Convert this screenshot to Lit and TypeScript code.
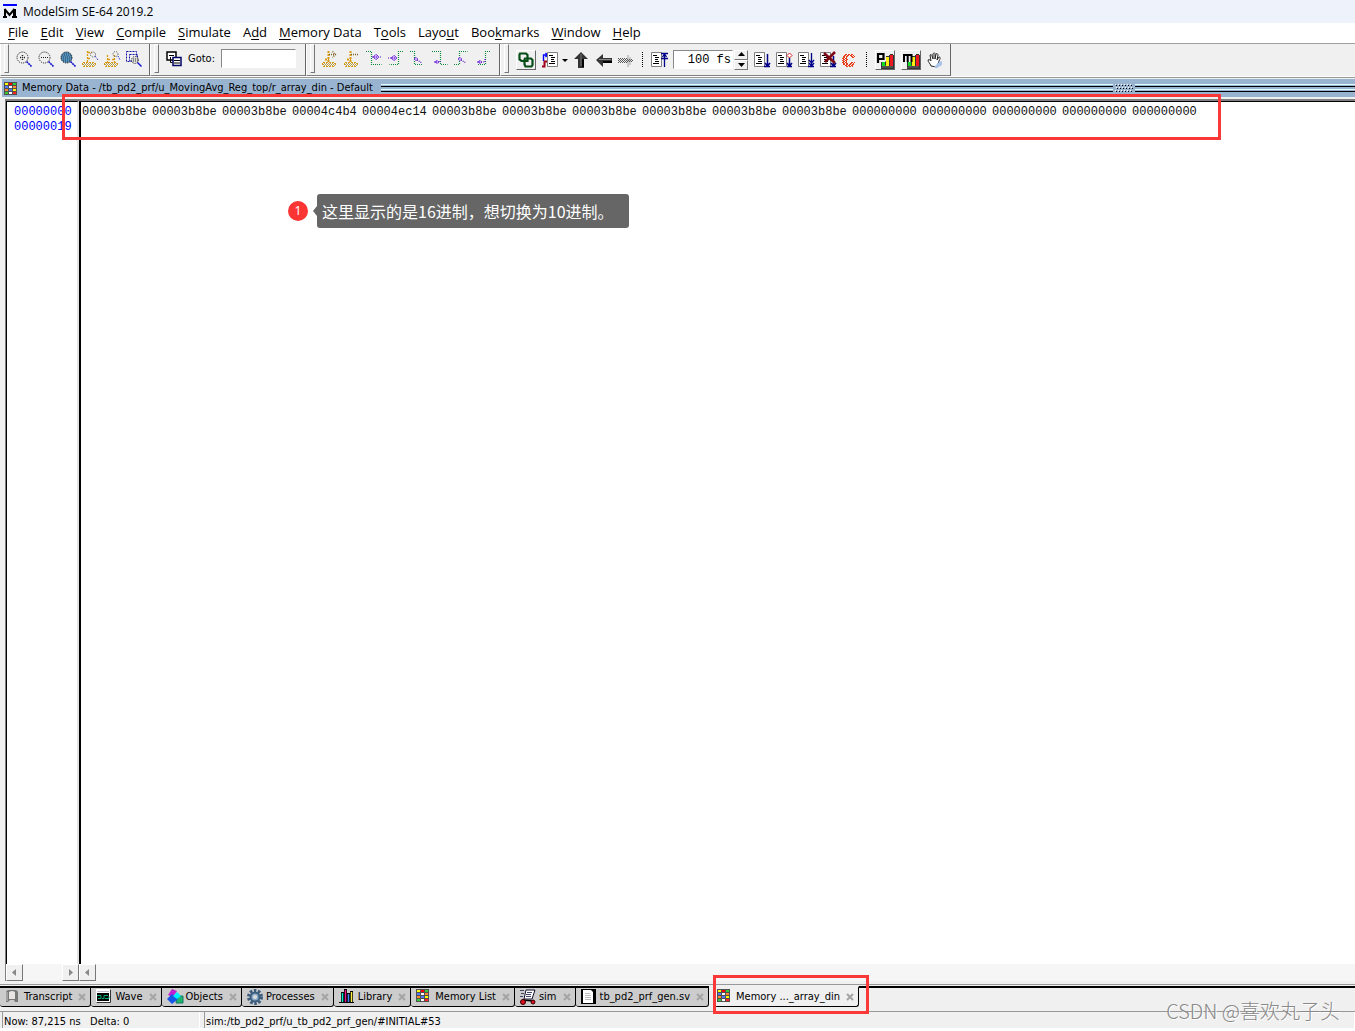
import { LitElement, html, css, svg, nothing, type TemplateResult } from "lit";
import { customElement, property } from "lit/decorators.js";

const page = svg`<path d="M.5 .5h10v14h-10z" fill="#fff" stroke="#808080"/><path d="M2 3.500h4M4 5.500h4M4 7.500h3M4 9.500h4M2 11.500h6" stroke="#000"/>`;
const lens = svg`<circle cx="6.500" cy="6.500" r="5.500" fill="none" stroke="#222" stroke-dasharray="1.200 1"/><path d="M10.500 10.500l5 5" stroke="#11c" stroke-width="1.600" stroke-dasharray="2 .6"/>`;
const base = svg`<path d="M1 11.500h12M1 15.500h12M.5 12v3M13.500 12v3" stroke="#d99a10" stroke-dasharray="2 1"/><path d="M2 12.500h11M1 13.500h12M2 14.500h11" stroke="#b8a050" stroke-dasharray="1 1"/>`;
const bars = svg`<path d="M5 12h12v4h-12z" fill="#505050"/><path d="M6 10h4v4h-4z" fill="#1d2"/><path d="M10 5h3v9h-3z" fill="#fe1"/><path d="M14 3h3v11h-3z" fill="#f01820"/><path d="M5.500 10v5M9.500 9.500v4M13.500 3v11M17.500 3v13M5 16.500h13M10 4.500h3M14 2.500h3" stroke="#333"/>`;
const cells = ["#ff0", "#f00", "#3c3", "#57f", "#fff", "#f83", "#f83", "#57f", "#ff0", "#3c3", "#fff", "#f22"];
const diamond = (x: number, y: number) =>
  svg`<path d="M${x - 3} ${y}l3-3 3 3-3 3z" fill="#c9a6ff" stroke="#5a10c8" stroke-dasharray="1 1"/>`;
const smallDiamond = (x: number, y: number) =>
  svg`<path d="M${x - 2} ${y}l2-2 2 2-2 2z" fill="#c9a6ff" stroke="#5a10c8" stroke-dasharray="1 1"/>`;
const trace = (d: string) => svg`<path d="${d}" fill="none" stroke="#0a8a3a" stroke-width="1.200" stroke-dasharray="1 1"/>`;
const tail = (d: string) => svg`<path d="${d}" fill="none" stroke="#5a10c8" stroke-width="1.200" stroke-dasharray="1 1"/>`;

const glyphs: Record<string, TemplateResult> = {
  logo: svg`<path d="M0 0h14v2h-14z" fill="#00f"/><path d="M1 5h2v9h-2zM10 5h3v9h-3zM0 12h4v2h-4zM9 12h5v2h-5z" fill="#000"/><path d="M1.500 5l5 6 5-6" fill="none" stroke="#000" stroke-width="2"/>`,
  zoomIn: svg`${lens}<path d="M4 6.500h5M6.500 4v5" stroke="#222" stroke-width="1.500" stroke-dasharray="1 1"/>`,
  zoomOut: svg`${lens}<path d="M3 6.500h7" stroke="#222" stroke-dasharray="1 1"/>`,
  zoomFull: svg`<circle cx="6.500" cy="6.500" r="5.500" fill="#5a91b4"/><path d="M2 4h9M1 6h11M1 8h11M3 10h7M4 2h5" stroke="#124b78" stroke-dasharray="1 1"/>${lens}`,
  zoomCursor: svg`${base}<path d="M5.500 0v11M6 1.500h4M6 7.500h2" stroke="#d99a10" stroke-width="1.300" stroke-dasharray="2 1"/><circle cx="11" cy="3.500" r="2.500" fill="none" stroke="#555" stroke-dasharray="1 1"/><path d="M13 5l3 4" stroke="#11c" stroke-dasharray="1 1"/>`,
  zoomTwo: svg`${base}<path d="M3.500 4v8M10.500 4v8M4 8.500h2M8 8.500h2" stroke="#d99a10" stroke-width="1.300" stroke-dasharray="2 1"/><circle cx="11.500" cy="3" r="2.500" fill="none" stroke="#555" stroke-dasharray="1 1"/><path d="M14 5l2 4" stroke="#11c" stroke-dasharray="1 1"/>`,
  zoomArea: svg`<path d="M.5 .5h10v10h-10zM3.500 3.500h8v6h-8z" fill="none" stroke="#11a" stroke-dasharray="2 1"/><circle cx="9" cy="9" r="3.500" fill="#ddd" stroke="#333" stroke-dasharray="1 1"/><path d="M7 8h5M7 10h5" stroke="#333" stroke-dasharray="1 1"/><path d="M11.500 11.500l4 4" stroke="#11c" stroke-width="1.500"/>`,
  goto: svg`<path d="M1 1h9v8h-9z" fill="#fff" stroke="#000" stroke-width="1.500"/><path d="M3 4.500h5" stroke="#000"/><path d="M7 6.500h8v8h-8z" fill="#fff" stroke="#006" stroke-width="1.500"/><path d="M8 9.500h6M8 12h6M4.500 6v5.500h2" stroke="#000" fill="none"/>`,
  cursorAdd: svg`${base}<path d="M6.500 0v12M3 8.500h4" stroke="#d99a10" stroke-width="2" stroke-dasharray="2 1"/><path d="M7 3.500h7M10.500 .5l3 3-3 3" fill="none" stroke="#7a6420" stroke-width="1.300" stroke-dasharray="1 1"/>`,
  cursorDel: svg`${base}<path d="M6.500 0v12M3 8.500h4" stroke="#d99a10" stroke-width="2" stroke-dasharray="2 1"/><path d="M7 3.500h7" stroke="#7a6420" stroke-width="1.300" stroke-dasharray="1 1"/>`,
  edgePrev: svg`${trace("M0 .5h5.500v13h10")}${diamond(10, 6)}${tail("M6 6h10")}`,
  edgeNext: svg`${trace("M15 .5h-4.500v13h-9")}${diamond(6, 7)}${tail("M0 7h10")}`,
  fallPrev: svg`${trace("M0 .5h4.500v13h8")}${smallDiamond(6, 8)}${tail("M7 9l5 3")}`,
  fallNext: svg`${trace("M0 .5h8.500v13h7")}${smallDiamond(5, 11)}${tail("M2 11h6v-2")}`,
  risePrev: svg`${trace("M0 13.500h5.500v-13h8")}${smallDiamond(6, 8)}${tail("M7 9l5 3")}`,
  riseNext: svg`${trace("M2 13.500h7.500v-13h5")}${smallDiamond(4, 11)}${tail("M1 11h8v-3")}`,
  chain: svg`<path d="M2 1.500h6l1.500 1.500v6h-6l-2-1.500v-5zM7 6.500h6l1.500 1.500v5l-1 1.500h-6l-1-2v-5z" fill="none" stroke="#064d17" stroke-width="2.200"/>`,
  restart: svg`<path d="M1.500 9v-6h4M3.500 1l2 2-2 2" fill="none" stroke="#00f" stroke-width="1.400"/><path d="M0 14.500h2.500v-5h2.500" fill="none" stroke="#a00018" stroke-width="2"/><g transform="translate(5 0)">${page}</g>`,
  up: svg`<path d="M7 0l7 7h-4v9h-6v-9h-4z" fill="#333"/><path d="M7 2v12" stroke="#777"/><path d="M9 7v8" stroke="#000" stroke-width="2"/>`,
  left: svg`<path d="M0 8l7-6v4h9v5h-9v4z" fill="#333"/><path d="M3 7.500h12" stroke="#888"/><path d="M7 10h9" stroke="#000" stroke-width="2"/>`,
  right: svg`<path d="M0 6.500h9M1 7.500h14M0 8.500h16M1 9.500h14M0 10.500h10M10 3.500v11M12 5.500v7" stroke="#555" stroke-dasharray="1 1"/>`,
  step: svg`${page}<path d="M13.500 2v13M10 1.500h7M10 6.500h7M11.500 5l2-3 2 3" fill="none" stroke="#008" stroke-width="1.300"/>`,
  run: svg`${page}<path d="M13.500 2v12M10 14.500h6M11 11l2.500 3 2.500-3" fill="none" stroke="#008" stroke-width="1.500"/>`,
  runCont: svg`${page}<path d="M13.500 6v8M11 14.500h5M11 11l2.500 3 2.500-3" fill="none" stroke="#008" stroke-width="1.500"/><path d="M11 3.500l2.500-2.500 2.500 2.500-2.500 2.500z" fill="#fff" stroke="#d22"/>`,
  runAll: svg`${page}<path d="M13.500 1v12M10 14.500h6M11 8l2.500 3 2.500-3M11 11l2.500 3 2.500-3" fill="none" stroke="#008" stroke-width="1.300"/>`,
  runBreak: svg`${page}<path d="M13.500 4v10M10 14.500h6M11 11l2.500 3 2.500-3" fill="none" stroke="#008" stroke-width="1.500"/><path d="M4 1l11 10M15 0l-10 10" stroke="#7d0a14" stroke-width="2.500"/>`,
  stop: svg`<path d="M3 2.500h8M1 4.500h5M9 4.500h4M0 6.500h5M0 8.500h5M0 10.500h5M9 10.500h4M1 12.500h12M4 14.500h7M2 3.500h10M1 5.500h4M10 5.500h3M1 7.500h5M1 9.500h4M1 11.500h5M8 11.500h4M3 13.500h8" stroke="#e8401c" stroke-width="1.200" stroke-dasharray="2 1"/>`,
  profile: svg`${bars}<path d="M2 11v-9h5.500v5h-5.500" fill="none" stroke="#000" stroke-width="2.200"/>`,
  memory: svg`${bars}<path d="M2 10v-7h7.500v7M5.700 3v7" fill="none" stroke="#000" stroke-width="2"/>`,
  hand: svg`<path d="M4 14c-1-3-3-4-3-6 1-1 2 0 3 1l-1-6c1-1 2 0 2 1l1 3v-5c1-2 2-1 2 0v5l1-5c1-1 2 0 2 1l-1 5 2-3c2 0 1 2 0 4l-2 6z" fill="#fff" stroke="#222"/><path d="M7 15l5-5 3-1v4l-5 3z" fill="#a9c4e8"/>`,
  grid: svg`<path d="M0 0h13v13h-13z" fill="#505050"/>${cells.map(
    (c, i) => svg`<rect x="${1 + (i % 3) * 4}" y="${1 + Math.floor(i / 3) * 3}" width="3" height="2" fill="${c}"/>`,
  )}`,
  transcript: svg`<path d="M1 13v-9q0-3 3-3h6q3 0 3 3v9h-3l-1-2h-4l-2 2z" fill="#777"/><path d="M4 3q3-2 6 0v7h-6z" fill="#e8e4e4"/><path d="M2 3v9" stroke="#ccc"/>`,
  wave: svg`<path d="M0 0h15v14h-15z" fill="#fff"/><path d="M.5 13.500h14v-13" stroke="#333" fill="none"/><path d="M1 4h12v8h-12z" fill="#000"/><path d="M1 6.500h4M2 9.500h3v-3M6 9.500h2v-3h4M9 9.500h4v-2" stroke="#0a7" fill="none"/><path d="M1 2.500h12" stroke="#bbc"/>`,
  objects: svg`<path d="M5 0l5 2-4 6-5-2z" fill="#c020d0"/><path d="M10 7h6v7h-7z" fill="#22b36a" stroke="#176"/><path d="M5 5l6 5-6 5-5-5z" fill="#1356e8"/><path d="M10 3l4 4-4 3-4-3z" fill="#0ef"/>`,
  gear: svg`<circle cx="8" cy="8" r="6.500" fill="none" stroke="#3b5c7c" stroke-width="3" stroke-dasharray="2.500 1.600"/><circle cx="8" cy="8" r="4.500" fill="#8aaac8" stroke="#3b5c7c" stroke-width="2"/><circle cx="8" cy="8" r="2" fill="#ddd"/>`,
  library: svg`<path d="M0 13.500h15" stroke="#000"/><path d="M2 3h3v10h-3zM5 0h3v13h-3zM8 4h3v9h-3zM11 2h3v11h-3z" fill="#000"/><path d="M3.500 4v9" stroke="#0ec" stroke-width="1.500"/><path d="M6.500 1v12" stroke="#e18" stroke-width="1.500"/><path d="M9.500 5v8" stroke="#48f" stroke-width="1.500"/><path d="M12.500 3v10" stroke="#fe4" stroke-width="1.500"/>`,
  sim: svg`<path d="M6 1h9l-3 9h-8z" fill="#fff" stroke="#113"/><path d="M7 3.500h5M6 5.500h5M6 7.500h5M0 1.500h4M1 4.500h3M0 7.500h3" stroke="#446"/><path d="M2 11l12 1" stroke="#000" stroke-width="1.500"/><circle cx="3" cy="13" r="2.500" fill="#e01020" stroke="#300"/><circle cx="13" cy="13" r="2" fill="#e01020" stroke="#300"/>`,
  file: svg`<path d="M0 0h15v15h-15z" fill="#000"/><path d="M2 1h8l2 2v11h-10z" fill="#fff"/><path d="M4 4.500h5M4 6.500h6M4 8.500h6M4 10.500h6" stroke="#bbb"/>`,
};

const icon = (name: string) =>
  html`<svg class="icon" width="16" height="16" viewBox="0 0 16 16" aria-hidden="true">${glyphs[name]}</svg>`;

const sheet = css`
  * { box-sizing: border-box; }
  .icon { display: block; flex: none; overflow: visible; }
  button { margin: 0; padding: 0; border: 0; background: none; font: inherit; color: inherit; }
`;

@customElement("tool-button")
class ToolButton extends LitElement {
  @property() name = "";
  @property() label = "";
  @property({ type: Boolean }) raised = false;
  static styles = [sheet, css`
    :host { display: block; flex: none; }
    .plain { display: block; width: 16px; height: 16px; }
    .raised { display: block; width: 20px; height: 20px; border: 1px solid; border-color: #fff #666 #666 #fff; }
    .raised .icon { margin: 1px; }
    .raised.big .icon { margin: 0; }
  `];
  render() {
    const big = this.name === "profile" || this.name === "memory" ? "big" : "";
    return html`<button class="${this.raised ? "raised" : "plain"} ${big}" aria-label=${this.label}>${icon(this.name)}</button>`;
  }
}

const menus: [string, string, string][] = [
  ["", "F", "ile"], ["", "E", "dit"], ["", "V", "iew"], ["", "C", "ompile"], ["", "S", "imulate"], ["A", "d", "d"],
  ["", "M", "emory Data"], ["T", "o", "ols"], ["Layo", "u", "t"], ["Boo", "k", "marks"], ["", "W", "indow"], ["", "H", "elp"],
];
const zoomTools = [["zoomIn", "Zoom in"], ["zoomOut", "Zoom out"], ["zoomFull", "Zoom full"], ["zoomCursor", "Zoom on cursor"], ["zoomTwo", "Zoom between cursors"], ["zoomArea", "Zoom area"]];
const edgeTools = [["cursorAdd", "Insert cursor"], ["cursorDel", "Delete cursor"], ["edgePrev", "Previous transition"], ["edgeNext", "Next transition"], ["fallPrev", "Previous falling edge"], ["fallNext", "Next falling edge"], ["risePrev", "Previous rising edge"], ["riseNext", "Next rising edge"]];
const runTools = [["run", "Run"], ["runCont", "Continue run"], ["runAll", "Run all"], ["runBreak", "Break"], ["stop", "Stop"]];
const words = [
  "00003b8be", "00003b8be", "00003b8be", "00004c4b4", "00004ec14", "00003b8be", "00003b8be", "00003b8be",
  "00003b8be", "00003b8be", "00003b8be", "000000000", "000000000", "000000000", "000000000", "000000000",
];
const tabs = [
  ["transcript", "Transcript"], ["wave", "Wave"], ["objects", "Objects"], ["gear", "Processes"], ["library", "Library"],
  ["grid", "Memory List"], ["sim", "sim"], ["file", "tb_pd2_prf_gen.sv"], ["grid", "Memory ..._array_din"],
];

@customElement("app-root")
class AppRoot extends LitElement {
  static styles = [sheet, css`
    :host { display: flex; flex-direction: column; position: relative; min-height: 100vh; overflow: hidden; background: #f0f0f0; color: #000; font: 11px/14px "DejaVu Sans Condensed", Tahoma, sans-serif; }
    .title { display: flex; align-items: center; gap: 4px; height: 23px; padding-left: 3px; background: #eef3fb; font: 12px/17px "Open Sans", "Segoe UI", sans-serif; }
    .title .icon { margin-top: 1px; }
    .menu { display: flex; height: 20px; gap: 12px; padding-left: 8px; background: #fff; font: 13px/18px "Open Sans", "Segoe UI", sans-serif; }
    .menu u { text-underline-offset: 2px; }
    .menu button { height: 18px; }
    .tools { display: flex; height: 34px; border-top: 1px solid #a0a0a0; border-bottom: 1px solid #fff; }
    .group { display: flex; align-items: center; gap: 6px; height: 32px; padding: 0 7px 2px 3px; border-right: 1px solid #666; border-bottom: 1px solid #808080; border-left: 1px solid #fff; }
    .group::before { content: ""; align-self: flex-end; flex: none; width: 3px; height: 27px; margin-right: 1px; border: 1px solid; border-color: #fff #777 #777 #fff; }
    .group.goto { padding-right: 9px; }
    .group.main { padding-bottom: 0; }
    .group.main::before { margin-bottom: 2px; }
    .group input { height: 19px; border: 1px solid; border-color: #888 #fff #fff #888; border-radius: 0; background: #fff; padding: 0 2px; outline: 0; }
    .goto input { width: 75px; }
    .group .time { width: 60px; text-align: right; padding-right: 1px; font: 12px/16px "Liberation Mono", monospace; }
    .spin { display: flex; flex-direction: column; width: 14px; height: 20px; margin-left: -5px; }
    .spin button { display: grid; place-items: center; flex: 1; border: 1px solid; border-color: #fff #777 #777 #fff; }
    .dots { width: 1px; height: 15px; margin: 0 2px; background: repeating-linear-gradient(#000 0 1px, transparent 1px 2px); }
    .caret { width: 6px; height: 8px; margin: 0 0 0 -2px; }
    .pane { display: flex; flex-direction: column; flex: 1; padding: 1px 0 0 2px; border-top: 1px solid #999; }
    .caption { display: flex; align-items: center; height: 18px; padding-left: 2px; background: #99b4d1; }
    .caption .icon { margin: 3px -1px 0 0; }
    .caption .grip { margin: 0; }
    .caption h1 { margin: 0 8px 0 3px; font: inherit; white-space: nowrap; }
    .rule { flex: 1; height: 8px; background: linear-gradient(#dff 0 1px, #99b4d1 1px 2px, #000 2px 3px, #99b4d1 3px 5px, #dff 5px 6px, #99b4d1 6px 7px, #000 7px); }
    .rule.end { flex: 0 0 220px; }
    .view { display: grid; grid-template-columns: 73px 1fr; grid-template-rows: 1fr 17px; flex: 1; position: relative; margin: 2px 0 0 3px; border-top: 2px solid #808080; border-left: 1px solid #808080; font: 12px/15px "Liberation Mono", monospace; }
    .addresses { margin: 0; padding: 3px 0 0 7px; list-style: none; color: #00f; background: #fff; border-top: 1px solid #000; border-left: 1px solid #000; border-right: 2px solid #e4e4e4; }
    .data { background: #fff; border-top: 1px solid #000; border-left: 2px solid #000; padding: 3px 0 0 1px; color: #111; }
    table { border-collapse: collapse; table-layout: fixed; }
    td { width: 70px; padding: 0; }
    .scroll { display: flex; justify-content: space-between; background: #f6f6f6; }
    .scroll button { display: grid; place-items: center; width: 17px; height: 17px; background: #f0f0f0; border: 1px solid; border-color: #fff #777 #777 #fff; }
    .mark { position: absolute; border: 3px solid #fb3838; pointer-events: none; }
    .mark.row { left: 56px; top: -7px; width: 1159px; height: 46px; }
    .note { position: absolute; left: 282px; top: 93px; display: flex; align-items: center; font: 16px/34px "Noto Sans CJK SC", sans-serif; color: #fff; }
    .badge { width: 20px; height: 20px; border-radius: 50%; background: #fb3434; text-align: center; font: 12px/20px "Noto Sans", sans-serif; }
    .note::before { content: ""; order: 1; margin-left: 5px; border: solid transparent; border-width: 5px 4px 5px 0; border-right-color: #666; }
    .bubble { order: 2; height: 34px; padding: 0 15px 0 5px; border-radius: 3px; background: #666; white-space: nowrap; }
    .tabs { display: flex; height: 27px; margin-top: 3px; padding-bottom: 3px; border-top: 1px solid #999; }
    .tab { display: flex; align-items: center; height: 21px; margin: 1px 0 0; padding: 0 4px 1px 5px; border: 1px solid #000; border-width: 2px 1px 1px 0; border-radius: 0 0 3px 3px; background: #ccc; white-space: nowrap; }
    .tab .name { margin: 0 6px 0 3px; }
    .tab.on { position: relative; margin-left: 5px; padding-left: 3px; border-top-color: #f0f0f0; background: #f0f0f0; }
    .tabs::after { content: ""; flex: 1; height: 2px; margin-top: 1px; background: #000; }
    .mark.tabmark { left: -1px; right: -11px; top: -13px; bottom: -8px; }
    .status { display: flex; gap: 4px; height: 20px; border-top: 1px solid #999; border-bottom: 3px solid #fff; }
    .status span { padding: 3px 1px 0; height: 16px; border-left: 1px solid #999; border-right: 1px solid #fff; white-space: pre; line-height: 13px; }
    .status .now { width: 198px; margin-left: 2px; }
    .status .path { flex: 1; }
    .credit { position: absolute; right: 15px; bottom: 6px; font: 20px/28px "Noto Sans CJK SC", sans-serif; font-weight: 300; color: #888; text-shadow: 1px 1px #fff; }
  `];

  private bar(items: string[][]) {
    return items.map(([n, l]) => html`<tool-button name=${n} label=${l}></tool-button>`);
  }
  private arrow(d: string, fill = "#000") {
    return html`<svg class="icon" width="7" height="7" viewBox="0 0 7 7" aria-hidden="true"><path d=${d} fill=${fill} /></svg>`;
  }

  render() {
    const close = html`<svg class="icon" width="8" height="8" viewBox="0 0 8 8" aria-hidden="true"><path d="M1 1l6 6M7 1l-6 6" stroke="#a4a4a4" stroke-width="2" /></svg>`;
    return html`
      <header class="title">${icon("logo")}<span>ModelSim SE-64 2019.2</span></header>
      <nav class="menu">${menus.map(([a, k, b]) => html`<button>${a}<u>${k}</u>${b}</button>`)}</nav>
      <div class="tools">
        <div class="group">${this.bar(zoomTools)}</div>
        <div class="group goto">${this.bar([["goto", "Go to"]])}<label for="goto">Goto:</label><input id="goto" /></div>
        <div class="group">${this.bar(edgeTools)}</div>
        <div class="group main">
          <tool-button raised name="chain" label="Environment"></tool-button>
          ${this.bar([["restart", "Restart"]])}
          <button class="caret" aria-label="Restart options">${this.arrow("M0 3h6l-3 3z")}</button>
          ${this.bar([["up", "Up"], ["left", "Back"], ["right", "Forward"]])}
          <i class="dots"></i>
          ${this.bar([["step", "Step"]])}
          <input class="time" aria-label="Run length" value="100 fs" />
          <div class="spin">
            <button aria-label="Increase">${this.arrow("M0 5h7l-3.500-4z")}</button>
            <button aria-label="Decrease">${this.arrow("M0 2h7l-3.500 4z")}</button>
          </div>
          ${this.bar(runTools)}
          <i class="dots"></i>
          <tool-button raised name="profile" label="Performance profiling"></tool-button>
          <tool-button raised name="memory" label="Memory profiling"></tool-button>
          ${this.bar([["hand", "Pan"]])}
        </div>
      </div>
      <main class="pane">
        <div class="caption">
          ${icon("grid")}
          <h1>Memory Data - /tb_pd2_prf/u_MovingAvg_Reg_top/r_array_din - Default</h1>
          <i class="rule"></i>
          <svg class="icon grip" width="22" height="8" viewBox="0 0 22 8" aria-hidden="true">
            <path d="M2 .5h18M3 3.500h18M2 6.500h18" stroke="#fff" stroke-dasharray="1 2" />
            <path d="M3 1.500h18M4 4.500h17M3 7.500h18" stroke="#000" stroke-dasharray="1 2" />
          </svg>
          <i class="rule end"></i>
        </div>
        <div class="view">
          <ol class="addresses"><li>00000000</li><li>00000019</li></ol>
          <div class="data"><table><tbody><tr>${words.map((w) => html`<td>${w}</td>`)}</tr></tbody></table></div>
          <div class="scroll">
            <button aria-label="Scroll left">${this.arrow("M5 0v7l-4-3.500z", "#888")}</button>
            <button aria-label="Scroll right">${this.arrow("M2 0v7l4-3.500z", "#888")}</button>
          </div>
          <div class="scroll"><button aria-label="Scroll data left">${this.arrow("M5 0v7l-4-3.500z", "#888")}</button></div>
          <div class="mark row"></div>
          <div class="note"><span class="badge">1</span><span class="bubble">这里显示的是16进制，想切换为10进制。</span></div>
        </div>
      </main>
      <nav class="tabs">
        ${tabs.map(([n, l], i) => {
          const on = i === tabs.length - 1;
          return html`<div class="tab ${on ? "on" : ""}">
            ${icon(n)}<button class="name">${l}</button><button aria-label="Close ${l}">${close}</button>
            ${on ? html`<div class="mark tabmark"></div>` : nothing}
          </div>`;
        })}
      </nav>
      <footer class="status"><span class="now">Now: 87,215 ns   Delta: 0</span><span class="path">sim:/tb_pd2_prf/u_tb_pd2_prf_gen/#INITIAL#53</span></footer>
      <div class="credit">CSDN @喜欢丸子头</div>
    `;
  }
}
